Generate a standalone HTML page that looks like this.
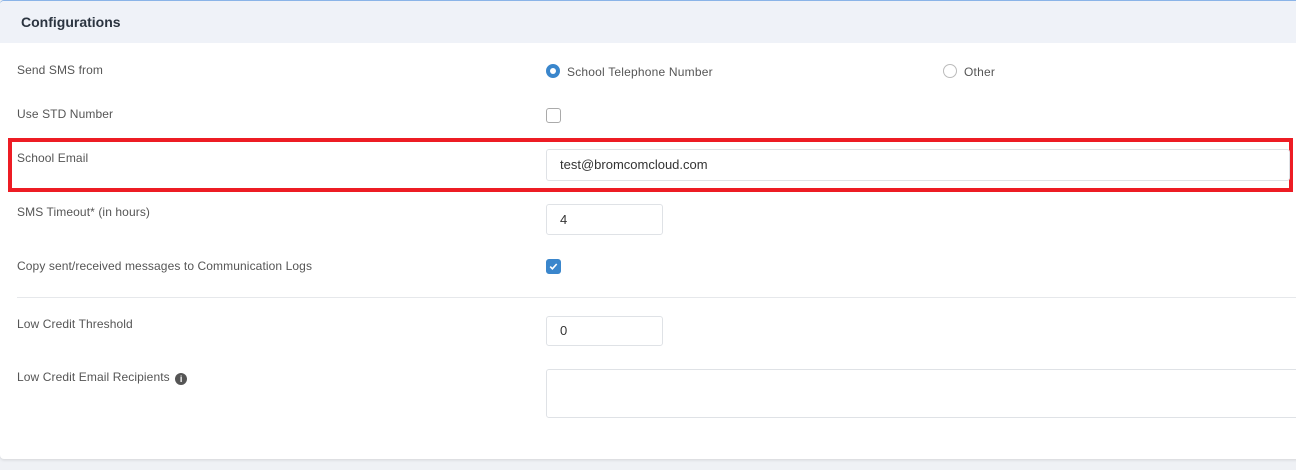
<!DOCTYPE html>
<html><head><style>
body{margin:0;width:1296px;height:470px;background:#eff1f5;font-family:"Liberation Sans",sans-serif;position:relative;overflow:hidden}
.card{position:absolute;left:0;top:0;width:1300px;height:458px;background:#fff;border-top:1px solid #8ab4e8;border-radius:4px 0 0 4px;box-shadow:0 1px 3px rgba(0,0,0,.12)}
.hd{position:absolute;left:0;top:1px;width:1300px;height:42px;background:#eff2f8;border-radius:4px 0 0 0}
.hd span{position:absolute;left:21px;top:13px;font-size:14px;font-weight:bold;color:#2b3440}
.l{position:absolute;left:17px;font-size:12px;color:#555;letter-spacing:.1px}
.t{position:absolute;font-size:12px;color:#555;letter-spacing:.2px}
.in{position:absolute;border:1px solid #dfe2e6;border-radius:3px;background:#fff;font-size:13px;color:#333;box-sizing:border-box;padding-left:13px}
.cb{position:absolute;left:546px;width:15px;height:15px;box-sizing:border-box;border:1px solid #aaa;border-radius:3px}
</style></head><body>
<div class="card"></div>
<div class="hd"><span>Configurations</span></div>
<div class="l" style="top:63px">Send SMS from</div>
<div style="position:absolute;left:546px;top:64px;width:14px;height:14px;border-radius:50%;background:#3a86cc;box-sizing:border-box;border:4px solid #3a86cc"><div style="width:6px;height:6px;border-radius:50%;background:#fff"></div></div>
<div class="t" style="left:567px;top:65px">School Telephone Number</div>
<div style="position:absolute;left:943px;top:64px;width:14px;height:14px;border-radius:50%;border:1px solid #bbb;box-sizing:border-box"></div>
<div class="t" style="left:964px;top:65px">Other</div>
<div class="l" style="top:107px">Use STD Number</div>
<div class="cb" style="top:108px"></div>
<div style="position:absolute;left:8px;top:138px;width:1277px;height:46px;border:4px solid #ed1c24"></div>
<div class="l" style="top:151px">School Email</div>
<div class="in" style="left:546px;top:149px;width:744px;height:32px;line-height:30px">test@bromcomcloud.com</div>
<div class="l" style="top:205px">SMS Timeout* (in hours)</div>
<div class="in" style="left:546px;top:204px;width:117px;height:31px;line-height:29px">4</div>
<div class="l" style="top:259px">Copy sent/received messages to Communication Logs</div>
<div class="cb" style="top:259px;background:#3a86cc;border-color:#3a86cc"><svg width="13" height="13" viewBox="0 0 13 13" style="position:absolute;left:0;top:0"><path d="M3.2 6.6l2.2 2.2 4.3-4.8" stroke="#fff" stroke-width="1.6" fill="none"/></svg></div>
<div style="position:absolute;left:17px;top:297px;width:1290px;height:1px;background:#e6e8eb"></div>
<div class="l" style="top:317px">Low Credit Threshold</div>
<div class="in" style="left:546px;top:316px;width:117px;height:30px;line-height:28px">0</div>
<div class="l" style="top:370px">Low Credit Email Recipients <span style="display:inline-block;margin-left:2px;width:12px;height:12px;border-radius:50%;background:#555;color:#fff;font-size:9px;font-weight:bold;text-align:center;line-height:12px;vertical-align:-1px">i</span></div>
<div class="in" style="left:546px;top:369px;width:760px;height:49px"></div>
</body></html>
